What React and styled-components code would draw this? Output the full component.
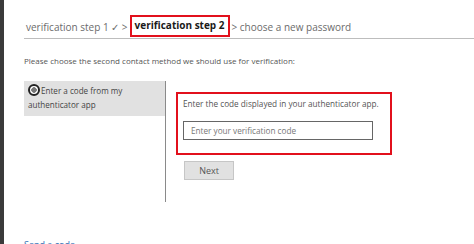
import styled, { createGlobalStyle } from 'styled-components'

const Global = createGlobalStyle`
  html, body { margin: 0; padding: 0; background: #fff; }
  body { font-family: "Open Sans", "Noto Sans", sans-serif; }
`

function App() {
  return (
    <>
      <Global />
      <Page>
        <Edge />
        <Main>
          <Steps>
            <Step>verification step 1 ✓ &gt;</Step>
            <Current>verification step 2</Current>
            <Step>&gt; choose a new password</Step>
          </Steps>
          <Intro>Please choose the second contact method we should use for verification:</Intro>
          <Methods>
            <Options>
              <Option>
                <Radio />
                Enter a code from my authenticator app
              </Option>
            </Options>
            <Panel>
              <Highlight>
                <Label>Enter the code displayed in your authenticator app.</Label>
                <Input placeholder="Enter your verification code" />
              </Highlight>
              <Button>Next</Button>
            </Panel>
          </Methods>
          <Link>Send a code</Link>
        </Main>
      </Page>
    </>
  )
}

const Page = styled.div`
  display: flex;
  width: 474px;
  height: 244px;
  overflow: hidden;
`
const Edge = styled.div`
  width: 4px;
  flex-shrink: 0;
  background: #3a3a3a;
`
const Main = styled.div`
  flex: 1;
  padding-left: 20px;
`
const Steps = styled.div`
  display: flex;
  align-items: flex-end;
  height: 39px;
  box-sizing: border-box;
  padding-bottom: 1px;
  border-bottom: 1px solid #bdbdbd;
  font-size: 10px;
  color: #6b6b6b;
  white-space: nowrap;
`
const Step = styled.span`
  padding-left: 2px;
  line-height: 20px;
`
const Current = styled.span`
  margin-left: 2px;
  height: 22px;
  box-sizing: border-box;
  line-height: 17px;
  padding: 0 3px 0 3px;
  border: 2px solid #e2101c;
  color: #1a1a1a;
  font-weight: 700;
`
const Intro = styled.p`
  margin: 16px 0 0;
  font-size: 8px;
  line-height: 11px;
  color: #555;
`
const Methods = styled.div`
  display: flex;
  margin-top: 15px;
`
const Options = styled.div`
  width: 141px;
  flex-shrink: 0;
  height: 121px;
  border-right: 1px solid #8a8a8a;
`
const Option = styled.div`
  background: #e1e1e1;
  height: 35px;
  padding: 3px 4px 0 4px;
  box-sizing: border-box;
  font-size: 8.1px;
  line-height: 14px;
  color: #444;
`
const Radio = styled.span`
  display: inline-block;
  vertical-align: -2px;
  width: 8px;
  height: 8px;
  margin-right: 1px;
  border: 2px solid #222;
  border-radius: 50%;
  background: radial-gradient(circle, #777 0 2.5px, #fff 3px);
`
const Panel = styled.div`
  padding: 11px 0 0 10px;
`
const Highlight = styled.div`
  width: 216px;
  height: 63px;
  border: 2px solid #e2101c;
  box-sizing: border-box;
  padding: 4px 0 0 5px;
`
const Label = styled.div`
  font-size: 8.2px;
  color: #555;
`
const Input = styled.input`
  display: block;
  margin-top: 12px;
  width: 190px;
  height: 19px;
  box-sizing: border-box;
  border: 1px solid #666;
  padding: 0 7px;
  font-family: "Open Sans", sans-serif;
  font-size: 8.2px;
  &::placeholder { color: #777; }
`
const Button = styled.button`
  margin: 6px 0 0 8px;
  width: 50px;
  height: 19px;
  background: #e1e1e1;
  border: 1px solid #c6c6c6;
  font-family: "Open Sans", sans-serif;
  font-size: 9px;
  color: #555;
  padding: 0;
`
const Link = styled.div`
  margin-top: 36px;
  font-size: 9px;
  color: #2f6fb5;
`

export default App
